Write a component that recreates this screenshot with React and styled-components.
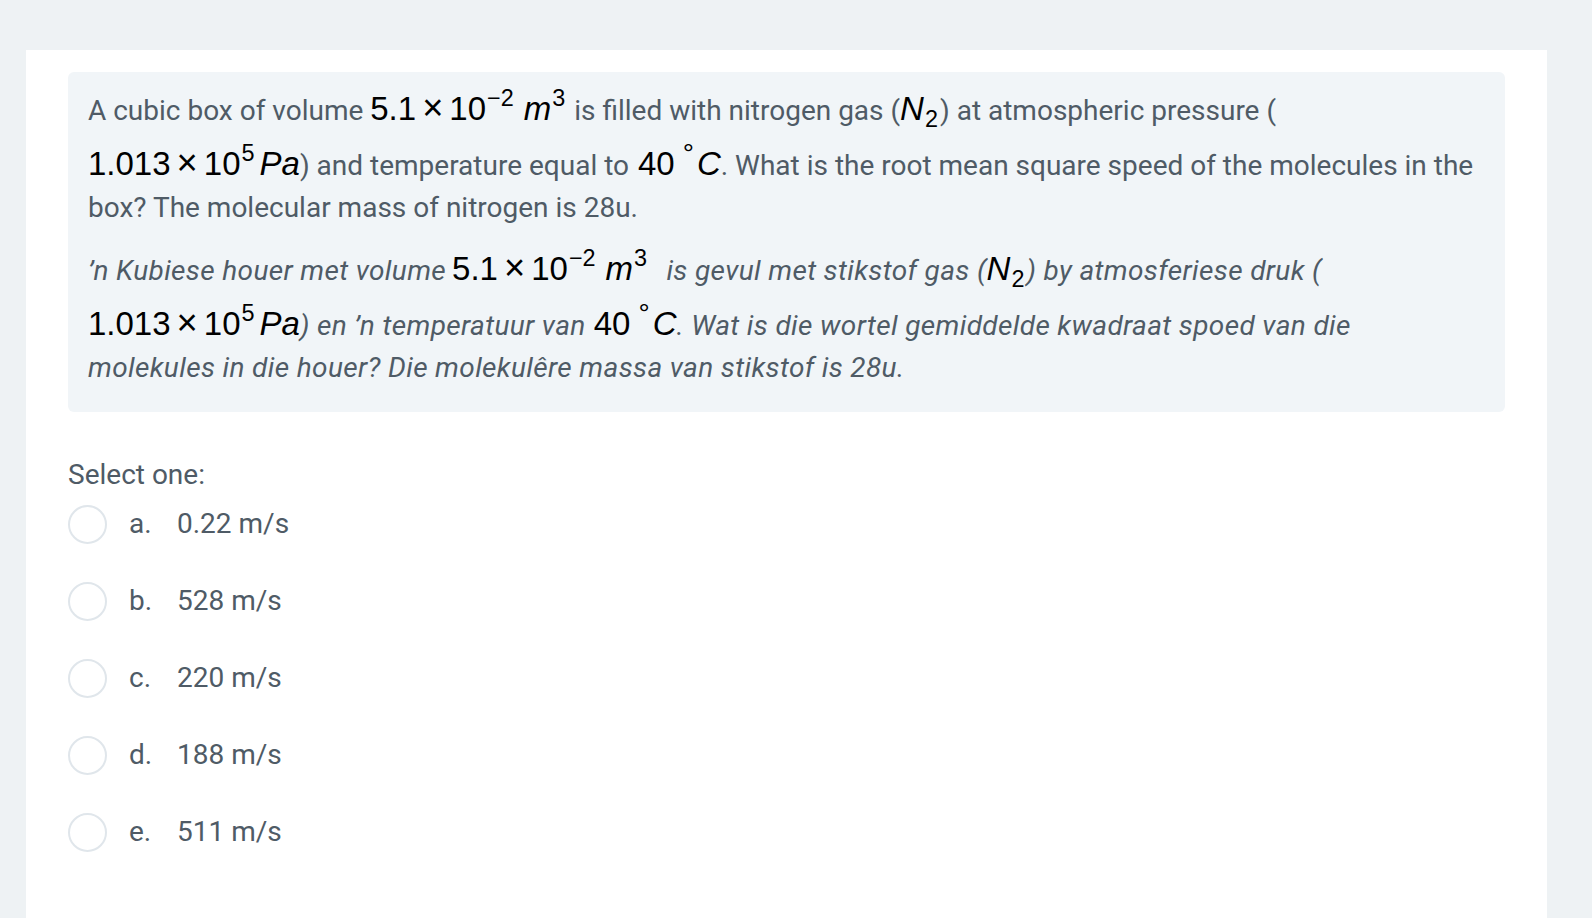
import React from "react";
import styled, { createGlobalStyle } from "styled-components";

const Global = createGlobalStyle`
  html, body { margin: 0; padding: 0; overflow: hidden; }
  body {
    background: #eef2f4;
    font-family: Roboto, "Noto Sans", "Liberation Sans", sans-serif;
  }
`;

const Page = styled.div`
  box-sizing: border-box;
  height: 918px;
  padding: 50px 45px 0 26px;
`;

const Card = styled.div`
  box-sizing: border-box;
  height: 100%;
  background: #ffffff;
  padding: 22px 42px 40px;
`;

const Formulation = styled.div`
  background: #f1f5f8;
  border-radius: 6px;
  padding: 18px 20px 23px;
`;

const Para = styled.p`
  margin: 0 0 21px;
  font-size: 28px;
  line-height: 42px;
  color: #4f5b66;
  font-style: ${(p) => (p.$italic ? "italic" : "normal")};
  letter-spacing: ${(p) => (p.$italic ? "0.36px" : "normal")};
  &:last-child { margin-bottom: 0; }
`;

const MathExpr = styled.span`
  font-family: "Liberation Sans", Arial, sans-serif;
  font-size: 33px;
  font-style: normal;
  letter-spacing: normal;
  color: #000;
  white-space: nowrap;
  line-height: 0;
  margin-left: ${(p) => p.$ml || 0}px;
  margin-right: ${(p) => p.$mr || 0}px;
`;

const Op = styled.span`
  font-size: 1.1em;
  line-height: 0;
  margin: 0 6px;
`;

const V = styled.span`
  font-style: italic;
  line-height: 0;
  margin-left: ${(p) => p.$gap || 0}px;
`;

const Sup = styled.span`
  font-size: 0.71em;
  line-height: 0;
  vertical-align: 0.6em;
  margin-left: 1px;
`;

const Deg = styled.span`
  font-size: 0.85em;
  line-height: 0;
  vertical-align: 0.43em;
  margin: 0 3px 0 8px;
`;

const Sub = styled.span`
  font-size: 0.71em;
  line-height: 52px;
  vertical-align: -0.3em;
  margin: 0 2px 0 1px;
`;

const Prompt = styled.div`
  margin-top: 42px;
  font-size: 28px;
  line-height: 42px;
  color: #4f5b66;
`;

const Answers = styled.div`
  margin-top: 7px;
  display: flex;
  flex-direction: column;
  gap: 35px;
`;

const Option = styled.label`
  display: flex;
  align-items: center;
  height: 42px;
  font-size: 28px;
  line-height: 42px;
  color: #4f5b66;
`;

const Radio = styled.span`
  box-sizing: border-box;
  width: 39px;
  height: 39px;
  border-radius: 50%;
  border: 2px solid #e0e6eb;
  background: #fff;
  margin-right: 22px;
  flex: none;
`;

const Letter = styled.span`
  width: 48px;
  flex: none;
`;

const Volume = () => (
  <>
    5.1<Op>×</Op>10<Sup>−2</Sup>
    <V $gap={10}>m</V>
    <Sup>3</Sup>
  </>
);

const Pressure = () => (
  <>
    1.013<Op>×</Op>10<Sup>5</Sup>
    <V $gap={5}>Pa</V>
  </>
);

const Temp = () => (
  <>
    40<Deg>°</Deg>
    <V>C</V>
  </>
);

const Nitrogen = () => (
  <>
    <V>N</V>
    <Sub>2</Sub>
  </>
);

const options = [
  ["a.", "0.22 m/s"],
  ["b.", "528 m/s"],
  ["c.", "220 m/s"],
  ["d.", "188 m/s"],
  ["e.", "511 m/s"],
];

export default function App() {
  return (
    <>
      <Global />
      <Page>
        <Card>
          <Formulation>
            <Para>
              A cubic box of volume{" "}
              <MathExpr $mr={2}>
                <Volume />
              </MathExpr>{" "}
              is filled with nitrogen gas (
              <MathExpr>
                <Nitrogen />
              </MathExpr>
              ) at atmospheric pressure (
              <br />
              <MathExpr>
                <Pressure />
              </MathExpr>
              ) and temperature equal to{" "}
              <MathExpr $ml={2}>
                <Temp />
              </MathExpr>
              . What is the root mean square speed of the molecules in the
              <br />
              box? The molecular mass of nitrogen is 28u.
            </Para>
            <Para $italic>
              ’n Kubiese houer met volume
              <MathExpr $ml={6} $mr={12}>
                <Volume />
              </MathExpr>{" "}
              is gevul met stikstof gas (
              <MathExpr>
                <Nitrogen />
              </MathExpr>
              ) by atmosferiese druk (
              <br />
              <MathExpr>
                <Pressure />
              </MathExpr>
              ) en ’n temperatuur van
              <MathExpr $ml={8}>
                <Temp />
              </MathExpr>
              . Wat is die wortel gemiddelde kwadraat spoed van die
              <br />
              molekules in die houer? Die molekulêre massa van stikstof is 28u.
            </Para>
          </Formulation>
          <Prompt>Select one:</Prompt>
          <Answers>
            {options.map(([l, t]) => (
              <Option key={l}>
                <Radio />
                <Letter>{l}</Letter>
                <span>{t}</span>
              </Option>
            ))}
          </Answers>
        </Card>
      </Page>
    </>
  );
}
